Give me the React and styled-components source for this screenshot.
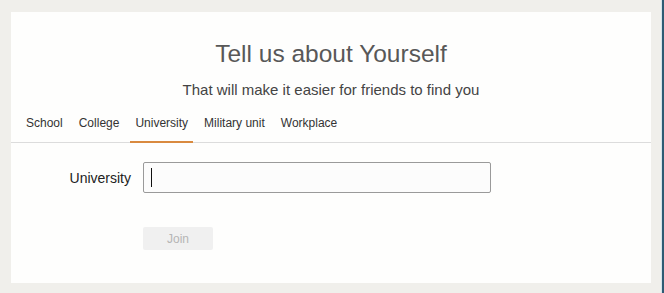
import styled, { createGlobalStyle } from "styled-components";

const GlobalStyle = createGlobalStyle`
    html, body {
        margin: 0;
        padding: 0;
        background: #f0efeb;
        font-family: "Liberation Sans", Arial, sans-serif;
    }
`

const tabs = ["School", "College", "University", "Military unit", "Workplace"];

const App = () => {
    return (
        <Page>
            <GlobalStyle />
            <Stage>
                <Card>
                    <Title>Tell us about Yourself</Title>
                    <Subtitle>That will make it easier for friends to find you</Subtitle>

                    <Tabs>
                        {tabs.map((t) => (
                            <Tab key={t} $active={t === "University"}>{t}</Tab>
                        ))}
                    </Tabs>

                    <FormRow>
                        <Label>University</Label>
                        <InputWrap>
                            <Input type="text" />
                            <Caret />
                        </InputWrap>
                    </FormRow>

                    <JoinButton disabled>Join</JoinButton>
                </Card>
            </Stage>
            <Edge />
        </Page>
    )
}

const Page = styled.div`
    display: flex;
    width: 664px;
    height: 293px;
    overflow: hidden;
`

const Stage = styled.div`
    flex: 1;
    padding: 12px 0 0 11px;
`

const Edge = styled.div`
    width: 2px;
    background: #2e5b74;
    border-left: 1px solid #d3e3ec;
`

const Card = styled.div`
    width: 640px;
    height: 271px;
    box-sizing: border-box;
    background: #fefefd;
    padding-top: 27px;
    display: flex;
    flex-direction: column;
`

const Title = styled.h1`
    margin: 0;
    font-size: 24.5px;
    font-weight: normal;
    line-height: 29px;
    color: #585858;
    text-align: center;
`

const Subtitle = styled.p`
    margin: 12px 0 0;
    font-size: 15px;
    line-height: 20px;
    color: #444;
    text-align: center;
`

const Tabs = styled.div`
    display: flex;
    gap: 6px;
    margin-top: 15px;
    padding-left: 10px;
    border-bottom: 1px solid #dcdcdc;
`

const Tab = styled.div`
    padding: 0 5px 10px;
    margin-bottom: -1px;
    font-size: 12px;
    line-height: 16px;
    color: #333;
    border-bottom: 2px solid ${(p) => (p.$active ? "#d98a3f" : "transparent")};
    cursor: pointer;
`

const FormRow = styled.div`
    display: flex;
    align-items: center;
    gap: 12px;
    margin-top: 19px;
`

const Label = styled.label`
    width: 120px;
    text-align: right;
    font-size: 14px;
    color: #222;
`

const InputWrap = styled.div`
    position: relative;
`

const Input = styled.input`
    width: 348px;
    height: 31px;
    box-sizing: border-box;
    border: 1px solid #9a9a9a;
    border-radius: 2px;
    background: #fcfcfc;
    font-family: "Liberation Sans", Arial, sans-serif;
    font-size: 14px;
    padding: 0 8px;
    outline: none;
`

const Caret = styled.span`
    position: absolute;
    left: 8px;
    top: 6px;
    width: 1px;
    height: 19px;
    background: #111;
`

const JoinButton = styled.button`
    margin: 34px 0 0 132px;
    width: 70px;
    height: 23px;
    border: none;
    border-radius: 2px;
    background: #f0f0f0;
    color: #b5b5b5;
    font-family: "Liberation Sans", Arial, sans-serif;
    font-size: 12px;
    padding: 0;
`

export default App;
